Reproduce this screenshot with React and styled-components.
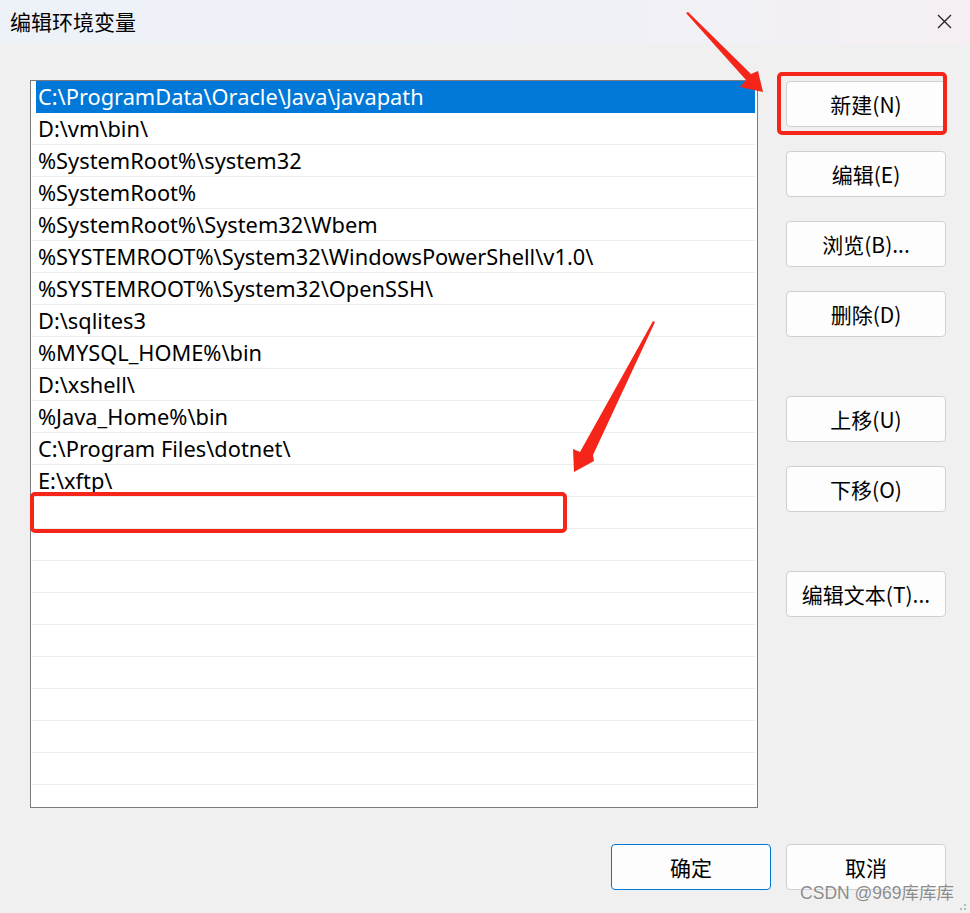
import styled, { createGlobalStyle } from "styled-components";

const Global = createGlobalStyle`
  html, body { margin: 0; padding: 0; background: #f0f0f0; }
  * { box-sizing: border-box; }
`

const Window = styled.div`
  position: relative;
  width: 970px;
  height: 913px;
  background: #f0f0f0;
  font-family: "Noto Sans", "Noto Sans CJK SC", sans-serif;
  color: #000;
  overflow: hidden;
`
const TitleBar = styled.div`
  height: 44px;
  display: flex;
  align-items: center;
  justify-content: space-between;
  padding: 0 18px 2px 10px;
  background: linear-gradient(90deg, #edf1f8 0%, #eff1f7 60%, #f5eff3 100%);
  font-family: "Noto Sans CJK SC", sans-serif;
  font-size: 21px;
`
const Body = styled.div`
  display: flex;
  padding: 36px 0 0 30px;
  gap: 28px;
`
const ListBox = styled.div`
  width: 728px;
  height: 728px;
  background: #fff;
  border: 1px solid #7a7a82;
  padding: 0 1px 0 1px;
  overflow: hidden;
`
const Row = styled.div`
  height: 32px;
  display: flex;
  align-items: center;
  padding-left: ${p => (p.$sel ? "2px" : "6px")};
  margin-left: ${p => (p.$sel ? "4px" : "0")};
  margin-right: 1px;
  border-bottom: 1px solid ${p => (p.$sel ? "#0078d7" : "#ececec")};
  background: ${p => (p.$sel ? "#0078d7" : "#fff")};
  color: ${p => (p.$sel ? "#fff" : "#000")};
  font-size: 21.8px;
  white-space: nowrap;
`
const Side = styled.div`
  display: flex;
  flex-direction: column;
  padding-top: 1px;
`
const Btn = styled.button`
  width: 160px;
  height: 46px;
  background: #fdfdfd;
  border: 1px solid ${p => (p.$primary ? "#0078d4" : "#d0d0d0")};
  border-radius: 4px;
  font-family: "Noto Sans CJK SC", sans-serif;
  font-size: 21px;
  color: #000;
  padding: 0;
  margin-bottom: ${p => p.$gap || 0}px;
`
const Footer = styled.div`
  display: flex;
  justify-content: flex-end;
  gap: 15px;
  padding: 36px 24px 0 0;
`
const Mark = styled.div`
  position: absolute;
  right: 16px;
  bottom: 9px;
  font-family: "Liberation Sans", "Noto Sans CJK SC", sans-serif;
  font-size: 17.5px;
  color: #8c8c8c;
  text-shadow: 0 0 2px rgba(255, 255, 255, 0.9);
`
const Overlay = styled.svg`
  position: absolute;
  left: 0;
  top: 0;
  pointer-events: none;
`

const paths = [
  "C:\\ProgramData\\Oracle\\Java\\javapath",
  "D:\\vm\\bin\\",
  "%SystemRoot%\\system32",
  "%SystemRoot%",
  "%SystemRoot%\\System32\\Wbem",
  "%SYSTEMROOT%\\System32\\WindowsPowerShell\\v1.0\\",
  "%SYSTEMROOT%\\System32\\OpenSSH\\",
  "D:\\sqlites3",
  "%MYSQL_HOME%\\bin",
  "D:\\xshell\\",
  "%Java_Home%\\bin",
  "C:\\Program Files\\dotnet\\",
  "E:\\xftp\\",
]

const rows = [...paths, ...Array(10).fill("")]

const App = () => {
  return (
    <Window>
      <Global />
      <TitleBar>
        <span>编辑环境变量</span>
        <svg width="15" height="15" viewBox="0 0 15 15">
          <path d="M1 1L14 14M14 1L1 14" stroke="#222" strokeWidth="1.3" />
        </svg>
      </TitleBar>
      <Body>
        <ListBox>
          {rows.map((r, i) => (
            <Row key={i} $sel={i === 0}>{r}</Row>
          ))}
        </ListBox>
        <Side>
          <Btn $gap={24}>新建(N)</Btn>
          <Btn $gap={24}>编辑(E)</Btn>
          <Btn $gap={24}>浏览(B)...</Btn>
          <Btn $gap={59}>删除(D)</Btn>
          <Btn $gap={24}>上移(U)</Btn>
          <Btn $gap={59}>下移(O)</Btn>
          <Btn>编辑文本(T)...</Btn>
        </Side>
      </Body>
      <Footer>
        <Btn $primary>确定</Btn>
        <Btn>取消</Btn>
      </Footer>
      <Mark>CSDN @969库库库</Mark>
      <Overlay width="970" height="913">
        <rect x="779" y="74" width="166" height="59" rx="3" fill="none" stroke="#f5251a" strokeWidth="4" />
        <rect x="32" y="494" width="533" height="37" rx="3" fill="none" stroke="#f5251a" strokeWidth="4" />
        <polygon points="686,13 688,12 751,74 758,71 763,92 740,87 746,80" fill="#f5251a" />
        <polygon points="653,321 655,322 593,455 594,461 574,472 573,449 580,452" fill="#f5251a" />
        <g fill="#b8b8b8">
          <rect x="964" y="904" width="2" height="2" />
          <rect x="964" y="908" width="2" height="2" />
          <rect x="960" y="908" width="2" height="2" />
        </g>
      </Overlay>
    </Window>
  )
}

export default App;
